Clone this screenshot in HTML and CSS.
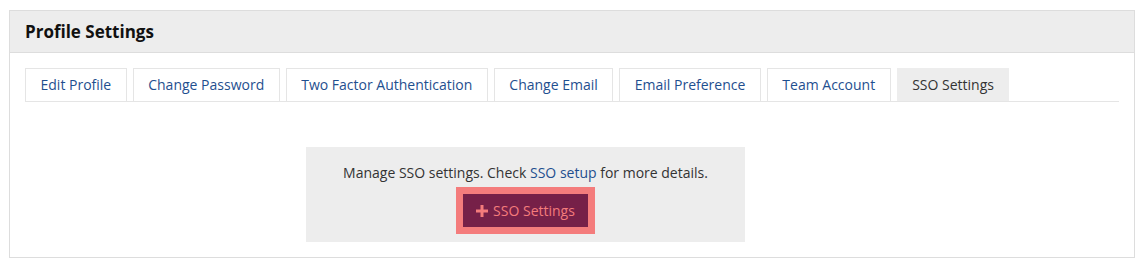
FILE: index.html
```html
<!DOCTYPE html>
<html lang="en">
  <head>
    <meta charset="UTF-8" />
    <title>Profile Settings</title>
    <link rel="stylesheet" href="styles.css">
  </head>
  <body>
    <div class="panel">
      <div class="panel-heading">Profile Settings</div>
      <div class="panel-body">
        <ul class="tabs">
          <li><a href="#">Edit Profile</a></li>
          <li><a href="#">Change Password</a></li>
          <li><a href="#">Two Factor Authentication</a></li>
          <li><a href="#">Change Email</a></li>
          <li><a href="#">Email Preference</a></li>
          <li><a href="#">Team Account</a></li>
          <li class="active"><a href="#">SSO Settings</a></li>
        </ul>

        <div class="sso-box">
          <p>Manage SSO settings. Check <a href="#">SSO setup</a> for more details.</p>
          <button class="btn-sso" type="button">
            <svg width="12" height="12" viewBox="0 0 12 12"><path d="M4.5 0h3v4.5H12v3H7.5V12h-3V7.5H0v-3h4.5z" fill="#f47c7c"/></svg>
            SSO Settings
          </button>
        </div>
      </div>
    </div>
  </body>
</html>
```

FILE: styles.css
```css
body {
  font-family: "Open Sans", sans-serif;
  font-size: 14px;
  color: #333;
  margin: 0;
  padding: 10px 8px 8px 9px;
}

.panel {
  border: 1px solid #ddd;
  background-color: #fff;
}

.panel-heading {
  background-color: #ededed;
  border-bottom: 1px solid #ddd;
  height: 41px;
  line-height: 41px;
  padding: 0 15px;
  font-size: 17px;
  font-weight: bold;
  color: #111;
}

.panel-body {
  padding: 15px 15px 15px 15px;
}

.tabs {
  list-style: none;
  margin: 0;
  padding: 0;
  display: flex;
  gap: 6px;
  border-bottom: 1px solid #e5e5e5;
}

.tabs li a {
  display: block;
  height: 32px;
  line-height: 32px;
  padding: 0 14.5px;
  border: 1px solid #e5e5e5;
  border-bottom: none;
  color: #1f4f8f;
  text-decoration: none;
}

.tabs li.active a {
  background-color: #ededed;
  border-color: #ededed;
  color: #333;
}

.sso-box {
  width: 439px;
  margin: 45px 0 0 281px;
  background-color: #ededed;
  text-align: center;
  padding: 15px 0 15px;
}

.sso-box p {
  margin: 0 0 10px;
  line-height: 22px;
}

.sso-box p a {
  color: #1f4f8f;
  text-decoration: none;
}

.btn-sso {
  font-family: "Open Sans", sans-serif;
  font-size: 14px;
  color: #f47c7c;
  background-color: #762048;
  border: none;
  height: 33px;
  padding: 0 13px;
  box-shadow: 0 0 0 7px #f47c7c;
  display: inline-flex;
  align-items: center;
  vertical-align: top;
  gap: 5px;
  cursor: pointer;
}
```
